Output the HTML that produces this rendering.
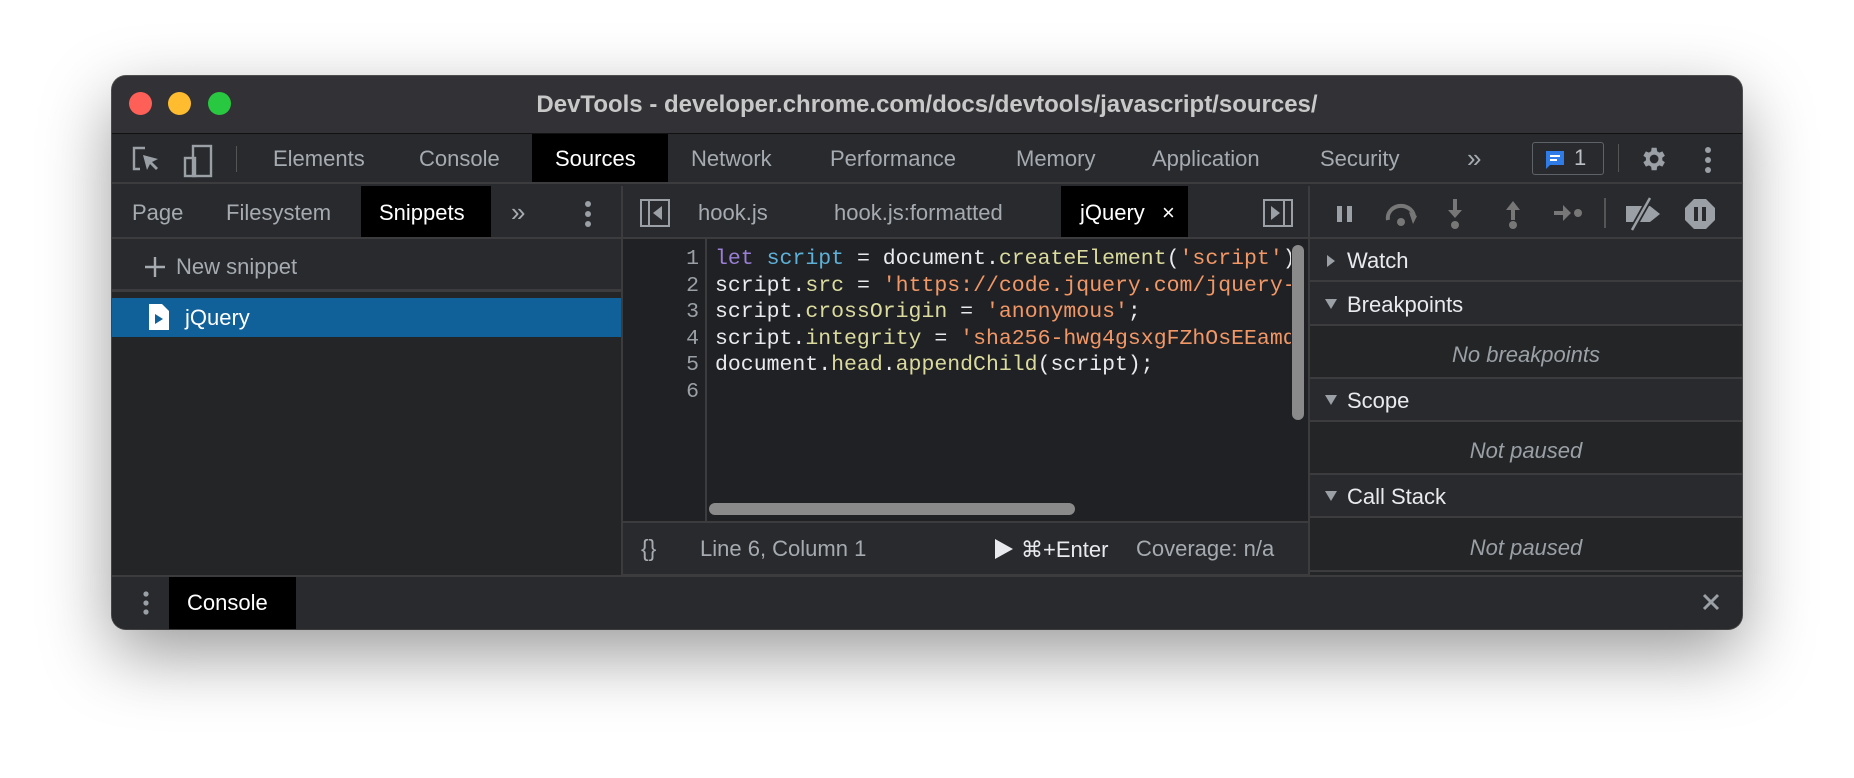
<!DOCTYPE html>
<html><head><meta charset="utf-8"><style>
*{margin:0;padding:0;box-sizing:border-box}
body{width:1854px;height:778px;background:#fff;position:relative;overflow:hidden;font-family:"Liberation Sans",sans-serif;font-size:22px;color:#bdc1c6}
.win{position:absolute;left:112px;top:76px;width:1630px;height:553px;border-radius:14px;background:#292a2d;overflow:hidden;box-shadow:0 25px 70px rgba(0,0,0,.4),0 0 0 1px #555}
.a{position:absolute}
.t{position:absolute;white-space:nowrap;line-height:1}
.title{left:0;top:0;width:1630px;height:58px;background:#323135;border-bottom:1px solid #111}
.dot{position:absolute;width:23px;height:23px;border-radius:50%;top:16px}
.tb{top:58px;height:50px;width:1630px;background:#292a2d;border-bottom:2px solid #3c3c3e}
.tab{color:#a5abb1}
.code{font-family:"Liberation Mono",monospace;font-size:21.5px;line-height:26.6px}
.hdr{position:absolute;left:1198px;width:432px;border-bottom:2px solid #3c3c3e;background:#292a2d}
.np{position:absolute;left:1198px;width:432px;background:#242527;border-bottom:2px solid #3c3c3e;color:#9aa0a6;font-style:italic;text-align:center}
</style></head><body>
<div class="win">
 <div class="a title">
  <div class="dot" style="left:17px;background:#fe5f57"></div>
  <div class="dot" style="left:56px;background:#febc2e"></div>
  <div class="dot" style="left:96px;background:#28c840"></div>
  <div class="t" style="left:0;width:1630px;text-align:center;top:17px;font-weight:bold;font-size:24px;color:#c8c8c8">DevTools - developer.chrome.com/docs/devtools/javascript/sources/</div>
 </div>
 <div class="a tb">
  <svg class="a" style="left:20px;top:12px" width="30" height="28" viewBox="0 0 30 28" fill="none" stroke="#9aa0a6" stroke-width="2.4"><path d="M13 2H2v21h6"/><path d="M11 9l4 15 3-6 6 6 2-2-6-6 6-3z" fill="#9aa0a6" stroke="none"/></svg>
  <svg class="a" style="left:71px;top:10px" width="30" height="34" viewBox="0 0 30 34" fill="none" stroke="#9aa0a6" stroke-width="2.4"><rect x="10" y="2" width="18" height="30"/><rect x="2" y="14" width="10" height="18"/></svg>
  <div class="a" style="left:124px;top:12px;width:1px;height:26px;background:#555"></div>
  <div class="t tab" style="left:161px;top:14px">Elements</div>
  <div class="t tab" style="left:307px;top:14px">Console</div>
  <div class="a" style="left:420px;top:0;width:136px;height:48px;background:#000"></div>
  <div class="t" style="left:443px;top:14px;color:#fff">Sources</div>
  <div class="t tab" style="left:579px;top:14px">Network</div>
  <div class="t tab" style="left:718px;top:14px">Performance</div>
  <div class="t tab" style="left:904px;top:14px">Memory</div>
  <div class="t tab" style="left:1040px;top:14px">Application</div>
  <div class="t tab" style="left:1208px;top:14px">Security</div>
  <div class="t tab" style="left:1355px;top:11px;font-size:26px">»</div>
  <div class="a" style="left:1420px;top:8px;width:72px;height:33px;border:1.5px solid #5f6368;border-radius:3px"></div>
  <svg class="a" style="left:1432px;top:15px" width="22" height="22" viewBox="0 0 22 22"><path d="M2 2h18v14H6l-4 4z" fill="#2f7be8"/><path d="M6 7h10M6 11h7" stroke="#fff" stroke-width="2"/></svg>
  <div class="t" style="left:1462px;top:13px;color:#bdc1c6">1</div>
  <div class="a" style="left:1506px;top:10px;width:1px;height:28px;background:#555"></div>
  <svg class="a" style="left:1526px;top:10px" width="30" height="30" viewBox="0 0 24 24"><path fill="#9aa0a6" d="M19.4 13a7.5 7.5 0 000-2l2.1-1.6-2-3.5-2.5 1a7 7 0 00-1.7-1L14.9 3h-4l-.4 2.9a7 7 0 00-1.7 1l-2.5-1-2 3.5L6.4 11a7.5 7.5 0 000 2l-2.1 1.6 2 3.5 2.5-1a7 7 0 001.7 1l.4 2.9h4l.4-2.9a7 7 0 001.7-1l2.5 1 2-3.5zM12.9 15.5a3.5 3.5 0 110-7 3.5 3.5 0 010 7z"/></svg>
  <svg class="a" style="left:1592px;top:12px" width="8" height="28"><circle cx="4" cy="4" r="3" fill="#9aa0a6"/><circle cx="4" cy="14" r="3" fill="#9aa0a6"/><circle cx="4" cy="24" r="3" fill="#9aa0a6"/></svg>
 </div>
 <div class="a" style="left:0;top:110px;width:509px;height:53px;background:#292a2d;border-bottom:2px solid #3c3c3e"></div>
 <div class="t tab" style="left:20px;top:126px">Page</div>
 <div class="t tab" style="left:114px;top:126px">Filesystem</div>
 <div class="a" style="left:249px;top:110px;width:130px;height:51px;background:#000"></div>
 <div class="t" style="left:267px;top:126px;color:#fff">Snippets</div>
 <div class="t tab" style="left:399px;top:123px;font-size:26px">»</div>
 <svg class="a" style="left:472px;top:124px" width="8" height="28"><circle cx="4" cy="4" r="3" fill="#9aa0a6"/><circle cx="4" cy="14" r="3" fill="#9aa0a6"/><circle cx="4" cy="24" r="3" fill="#9aa0a6"/></svg>
 <div class="a" style="left:0;top:163px;width:509px;height:390px;background:#242527"></div>
 <div class="a" style="left:0;top:163px;width:509px;height:53px;border-bottom:3px solid #3c3c3e;background:#292a2d"></div>
 <svg class="a" style="left:33px;top:181px" width="20" height="20" stroke="#a5abb1" stroke-width="2.4"><path d="M10 0v20M0 10h20"/></svg>
 <div class="t tab" style="left:64px;top:180px">New snippet</div>
 <div class="a" style="left:0;top:222px;width:509px;height:39px;background:#10609a"></div>
 <svg class="a" style="left:37px;top:228px" width="20" height="26" viewBox="0 0 20 26"><path d="M0 0h13l7 7v19H0z" fill="#fff"/><path d="M6 10l8 5-8 5z" fill="#10609a"/></svg>
 <div class="t" style="left:73px;top:231px;color:#fff">jQuery</div>
 <div class="a" style="left:509px;top:110px;width:2px;height:465px;background:#3c3c3e"></div>
 <div class="a" style="left:511px;top:110px;width:687px;height:53px;background:#292a2d;border-bottom:2px solid #3c3c3e"></div>
 <svg class="a" style="left:528px;top:123px" width="30" height="28" viewBox="0 0 30 28" fill="none" stroke="#9aa0a6" stroke-width="2"><rect x="1" y="1" width="28" height="26"/><path d="M9 1v26"/><path d="M22 7v14l-9-7z" fill="#9aa0a6" stroke="none"/></svg>
 <div class="t tab" style="left:586px;top:126px">hook.js</div>
 <div class="t tab" style="left:722px;top:126px">hook.js:formatted</div>
 <div class="a" style="left:949px;top:110px;width:127px;height:51px;background:#000"></div>
 <div class="t" style="left:968px;top:126px;color:#fff">jQuery</div>
 <div class="t" style="left:1050px;top:126px;color:#fff">×</div>
 <svg class="a" style="left:1151px;top:123px" width="30" height="28" viewBox="0 0 30 28" fill="none" stroke="#9aa0a6" stroke-width="2"><rect x="1" y="1" width="28" height="26"/><path d="M21 1v26"/><path d="M8 7v14l9-7z" fill="#9aa0a6" stroke="none"/></svg>
 <div class="a" style="left:511px;top:163px;width:687px;height:282px;background:#202124"></div>
 <div class="a" style="left:593px;top:163px;width:2px;height:282px;background:#3c3c3e"></div>
 <div class="a code" style="left:511px;top:170px;width:76px;text-align:right;color:#9aa0a6">1<br>2<br>3<br>4<br>5<br>6</div>
 <div class="a code" style="left:603px;top:170px;width:576px;overflow:hidden;white-space:pre;color:#e8eaed"><span style="color:#9a7fd6">let</span> <span style="color:#5db0d7">script</span> = document.<span style="color:#dbdb9e">createElement</span>(<span style="color:#f29766">'script'</span>)
script.<span style="color:#dbdb9e">src</span> = <span style="color:#f29766">'https://code.jquery.com/jquery-3.6.0.min.js'</span>
script.<span style="color:#dbdb9e">crossOrigin</span> = <span style="color:#f29766">'anonymous'</span>;
script.<span style="color:#dbdb9e">integrity</span> = <span style="color:#f29766">'sha256-hwg4gsxgFZhOsEEamdOYGBf13FyQuiTwlAQgxVSNgt4='</span>;
document.<span style="color:#dbdb9e">head</span>.<span style="color:#dbdb9e">appendChild</span>(script);
</div>
 <div class="a" style="left:1180px;top:169px;width:12px;height:175px;border-radius:6px;background:#8a8a8a"></div>
 <div class="a" style="left:597px;top:427px;width:366px;height:12px;border-radius:6px;background:#8a8a8a"></div>
 <div class="a" style="left:511px;top:445px;width:687px;height:55px;background:#292a2d;border-top:2px solid #3c3c3e;border-bottom:2px solid #3c3c3e"></div>
 <div class="t tab" style="left:529px;top:461px;font-size:23px">{}</div>
 <div class="t tab" style="left:588px;top:462px">Line 6, Column 1</div>
 <svg class="a" style="left:882px;top:462px" width="20" height="22"><path d="M1 1l18 10L1 21z" fill="#e8eaed"/></svg>
 <div class="t" style="left:909px;top:463px;color:#e8eaed">⌘+Enter</div>
 <div class="t tab" style="left:1024px;top:462px">Coverage: n/a</div>
 <div class="a" style="left:1196px;top:110px;width:2px;height:465px;background:#3c3c3e"></div>
 <div class="a" style="left:1198px;top:110px;width:432px;height:53px;background:#292a2d;border-bottom:2px solid #3c3c3e"></div>
 <svg class="a" style="left:1224px;top:128px" width="18" height="20"><rect x="1" y="2" width="5" height="16" fill="#9aa0a6"/><rect x="11" y="2" width="5" height="16" fill="#9aa0a6"/></svg>
 <svg class="a" style="left:1272px;top:126px" width="36" height="26" viewBox="0 0 36 26" fill="none" stroke="#777" stroke-width="4"><path d="M4 18a13 12 0 0126-4"/><path d="M25 10l8 4-4 8z" fill="#777" stroke="none"/><circle cx="17" cy="20" r="4" fill="#777" stroke="none"/></svg>
 <svg class="a" style="left:1335px;top:122px" width="16" height="32" fill="#777"><rect x="6" y="1" width="4" height="14"/><path d="M1 12h14l-7 8z"/><circle cx="8" cy="27" r="4"/></svg>
 <svg class="a" style="left:1393px;top:122px" width="16" height="32" fill="#777"><rect x="6" y="8" width="4" height="14"/><path d="M1 12h14L8 3z"/><circle cx="8" cy="27" r="4"/></svg>
 <svg class="a" style="left:1441px;top:128px" width="30" height="18" fill="#777"><rect x="1" y="7" width="12" height="4"/><path d="M10 1l8 8-8 8z"/><circle cx="25" cy="9" r="4"/></svg>
 <div class="a" style="left:1492px;top:122px;width:2px;height:30px;background:#555"></div>
 <svg class="a" style="left:1512px;top:120px" width="40" height="36" viewBox="0 0 40 36"><path d="M2 10h24l10 8-10 8H2z" fill="#9aa0a6"/><path d="M8 34L26 2" stroke="#292a2d" stroke-width="6"/><path d="M8 34L26 2" stroke="#9aa0a6" stroke-width="2.5"/></svg>
 <svg class="a" style="left:1572px;top:122px" width="32" height="32" viewBox="0 0 32 32"><path d="M10 1h12l9 9v12l-9 9H10l-9-9V10z" fill="#9aa0a6"/><rect x="10" y="9" width="4" height="14" fill="#292a2d"/><rect x="18" y="9" width="4" height="14" fill="#292a2d"/></svg>
 <div class="hdr" style="top:163px;height:43px"></div>
 <svg class="a" style="left:1214px;top:178px" width="10" height="14"><path d="M1 1l8 6-8 6z" fill="#9aa0a6"/></svg>
 <div class="t" style="left:1235px;top:174px;color:#e8eaed">Watch</div>
 <div class="hdr" style="top:206px;height:44px"></div>
 <svg class="a" style="left:1212px;top:222px" width="14" height="12"><path d="M1 1h12l-6 10z" fill="#9aa0a6"/></svg>
 <div class="t" style="left:1235px;top:218px;color:#e8eaed">Breakpoints</div>
 <div class="np" style="top:250px;height:53px;padding-top:16px">No breakpoints</div>
 <div class="hdr" style="top:303px;height:43px"></div>
 <svg class="a" style="left:1212px;top:318px" width="14" height="12"><path d="M1 1h12l-6 10z" fill="#9aa0a6"/></svg>
 <div class="t" style="left:1235px;top:314px;color:#e8eaed">Scope</div>
 <div class="np" style="top:346px;height:53px;padding-top:16px">Not paused</div>
 <div class="hdr" style="top:399px;height:43px"></div>
 <svg class="a" style="left:1212px;top:414px" width="14" height="12"><path d="M1 1h12l-6 10z" fill="#9aa0a6"/></svg>
 <div class="t" style="left:1235px;top:410px;color:#e8eaed">Call Stack</div>
 <div class="np" style="top:442px;height:54px;padding-top:17px">Not paused</div>
 <div class="a" style="left:1198px;top:496px;width:432px;height:4px;background:#242527"></div>
 <div class="a" style="left:0;top:499px;width:1630px;height:54px;background:#292a2d;border-top:2px solid #3c3c3e"></div>
 <svg class="a" style="left:30px;top:514px" width="8" height="26"><circle cx="4" cy="4" r="2.6" fill="#9aa0a6"/><circle cx="4" cy="13" r="2.6" fill="#9aa0a6"/><circle cx="4" cy="22" r="2.6" fill="#9aa0a6"/></svg>
 <div class="a" style="left:57px;top:501px;width:127px;height:52px;background:#000"></div>
 <div class="t" style="left:75px;top:516px;color:#fff">Console</div>
 <svg class="a" style="left:1590px;top:517px" width="18" height="18" stroke="#9aa0a6" stroke-width="3"><path d="M2 2l14 14M16 2L2 16"/></svg>
</div>
</body></html>
